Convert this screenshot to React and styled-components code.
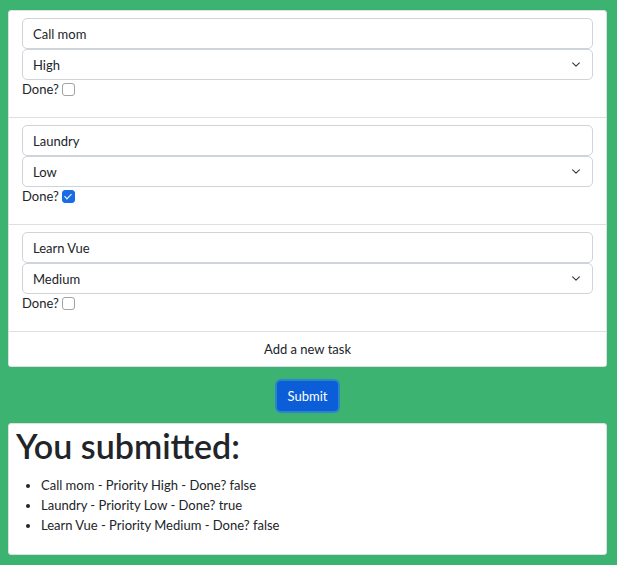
import React, { useState } from 'react';
import styled, { createGlobalStyle } from 'styled-components';

const GlobalStyle = createGlobalStyle`
    body {
        margin: 0;
        background: #3cb371;
        font-family: Lato, "Open Sans", sans-serif;
        font-size: 13px;
        color: #212529;
    }
`;

const Page = styled.div`
    padding: 10px 10px 10px 8px;
    display: flex;
    flex-direction: column;
    align-items: stretch;
`;

const Card = styled.div`
    background: #fff;
    border: 1px solid #dfdfdf;
    border-radius: 3px;
`;

const TaskItem = styled.div`
    padding: 7px 13px 19px;
    border-bottom: 1px solid #dfdfdf;
`;

const TextInput = styled.input`
    display: block;
    box-sizing: border-box;
    width: 100%;
    height: 31px;
    padding: 0 10px;
    border: 1px solid #ced4da;
    border-radius: 5px;
    font: inherit;
    color: #212529;
    background: #fff;
    outline: none;
`;

const SelectWrap = styled.div`
    position: relative;
    svg {
        position: absolute;
        right: 11px;
        top: 11px;
        pointer-events: none;
    }
`;

const Select = styled.select`
    display: block;
    box-sizing: border-box;
    width: 100%;
    height: 31px;
    padding: 0 10px;
    border: 1px solid #ced4da;
    border-radius: 5px;
    font: inherit;
    color: #212529;
    background: #fff;
    appearance: none;
    outline: none;
`;

const DoneRow = styled.label`
    display: flex;
    align-items: center;
    gap: 3px;
    height: 18px;
    line-height: 18px;
`;

const Check = styled.input`
    appearance: none;
    margin: 1px 0 0;
    width: 13px;
    height: 13px;
    box-sizing: border-box;
    border: 1px solid #a3a3a3;
    border-radius: 3px;
    background: #fff;
    display: grid;
    place-items: center;
    &:checked {
        background: #1a6be6;
        border-color: #1a6be6;
    }
    &:checked::after {
        content: '';
        width: 3px;
        height: 6px;
        border: solid #fff;
        border-width: 0 1.5px 1.5px 0;
        transform: translateY(-1px) rotate(45deg);
    }
`;

const AddButton = styled.button`
    display: block;
    width: 100%;
    height: 34px;
    border: 0;
    background: #fff;
    font: inherit;
    color: #212529;
    cursor: pointer;
`;

const SubmitRow = styled.div`
    display: flex;
    justify-content: center;
    padding: 14px 0 12px;
`;

const SubmitButton = styled.button`
    height: 30px;
    padding: 0 11px;
    border: 0;
    border-radius: 4px;
    background: #0b5ed7;
    color: #fff;
    font: inherit;
    box-shadow: 0 0 0 2px #2b86c9;
`;

const Result = styled(Card)`
    height: 132px;
    box-sizing: border-box;
    padding: 0 7px;
    h1 {
        margin: 0;
        font-size: 34px;
        font-weight: 600;
        line-height: 1.2;
        padding-top: 2px;
    }
    ul {
        margin: 8px 0 0;
        padding-left: 25px;
    }
    li {
        line-height: 20px;
    }
`;

const Chevron = () => (
    <svg width="12" height="9" viewBox="0 0 16 16">
        <path d="M2 5l6 6 6-6" fill="none" stroke="#343a40" strokeWidth="2" strokeLinecap="round" strokeLinejoin="round" />
    </svg>
);

const initialTasks = [
    { name: 'Call mom', priority: 'High', done: false },
    { name: 'Laundry', priority: 'Low', done: true },
    { name: 'Learn Vue', priority: 'Medium', done: false },
];

const App = () => {
    const [tasks, setTasks] = useState(initialTasks);

    const update = (i, key, value) => {
        setTasks(tasks.map((t, j) => (j === i ? { ...t, [key]: value } : t)));
    };

    return (
        <>
            <GlobalStyle />
            <Page>
                <Card>
                    {tasks.map((task, i) => (
                        <TaskItem key={i}>
                            <TextInput value={task.name} onChange={e => update(i, 'name', e.target.value)} />
                            <SelectWrap>
                                <Select value={task.priority} onChange={e => update(i, 'priority', e.target.value)}>
                                    <option>High</option>
                                    <option>Medium</option>
                                    <option>Low</option>
                                </Select>
                                <Chevron />
                            </SelectWrap>
                            <DoneRow>
                                Done?
                                <Check type="checkbox" checked={task.done} onChange={e => update(i, 'done', e.target.checked)} />
                            </DoneRow>
                        </TaskItem>
                    ))}
                    <AddButton onClick={() => setTasks([...tasks, { name: '', priority: 'Low', done: false }])}>
                        Add a new task
                    </AddButton>
                </Card>
                <SubmitRow>
                    <SubmitButton>Submit</SubmitButton>
                </SubmitRow>
                <Result>
                    <h1>You submitted:</h1>
                    <ul>
                        {tasks.map((t, i) => (
                            <li key={i}>{t.name} - Priority {t.priority} - Done? {String(t.done)}</li>
                        ))}
                    </ul>
                </Result>
            </Page>
        </>
    );
};

export default App;
